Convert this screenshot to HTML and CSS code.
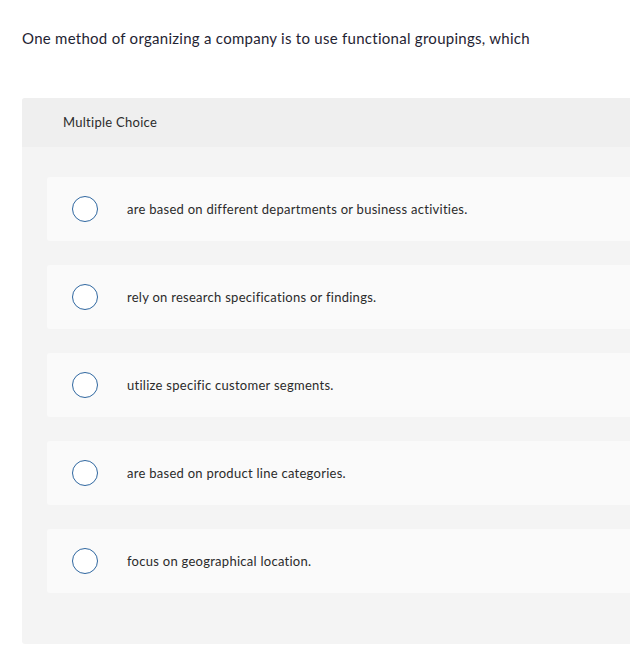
FILE: index.html
```html
<!DOCTYPE html>
<html>
<head>
<meta charset="utf-8">
<link rel="stylesheet" href="styles.css">
</head>
<body>
<div class="page">
  <p class="question">One method of organizing a company is to use functional groupings, which</p>
  <div class="panel">
    <div class="panel-head">Multiple Choice</div>
    <div class="panel-body">
      <label class="option"><span class="radio"></span><span class="opt-text">are based on different departments or business activities.</span></label>
      <label class="option"><span class="radio"></span><span class="opt-text">rely on research specifications or findings.</span></label>
      <label class="option"><span class="radio"></span><span class="opt-text">utilize specific customer segments.</span></label>
      <label class="option"><span class="radio"></span><span class="opt-text">are based on product line categories.</span></label>
      <label class="option"><span class="radio"></span><span class="opt-text">focus on geographical location.</span></label>
    </div>
  </div>
</div>
</body>
</html>
```
FILE: styles.css
```css
html, body {
  margin: 0;
  padding: 0;
  background: #ffffff;
  overflow: hidden;
}
.page {
  font-family: Lato, "Open Sans", Arial, sans-serif;
  font-variant-ligatures: none;
  letter-spacing: 0.27px;
  color: #2b2b2b;
  padding: 28px 0 0 22px;
}
.question {
  margin: 0;
  font-size: 15px;
  line-height: 20px;
  color: #1f2433;
}
.panel {
  margin-top: 50px;
  background: #f4f4f4;
  border-radius: 3px 0 0 3px;
}
.panel-head {
  background: #efefef;
  height: 49px;
  box-sizing: border-box;
  padding: 16px 0 0 41px;
  font-size: 13px;
  line-height: 16px;
  color: #2b2b2b;
  border-radius: 3px 0 0 0;
}
.panel-body {
  display: flex;
  flex-direction: column;
  gap: 24px;
  padding: 30px 0 51px 25px;
}
.option {
  display: flex;
  align-items: center;
  height: 64px;
  background: #fafafa;
  border-radius: 3px 0 0 3px;
  padding-left: 25px;
}
.radio {
  width: 24px;
  height: 24px;
  border: 1.5px solid #2f67a0;
  border-radius: 50%;
  background: #fff;
  flex: none;
}
.opt-text {
  margin-left: 29px;
  font-size: 13px;
  line-height: 16px;
  color: #2b2b2b;
}
```
